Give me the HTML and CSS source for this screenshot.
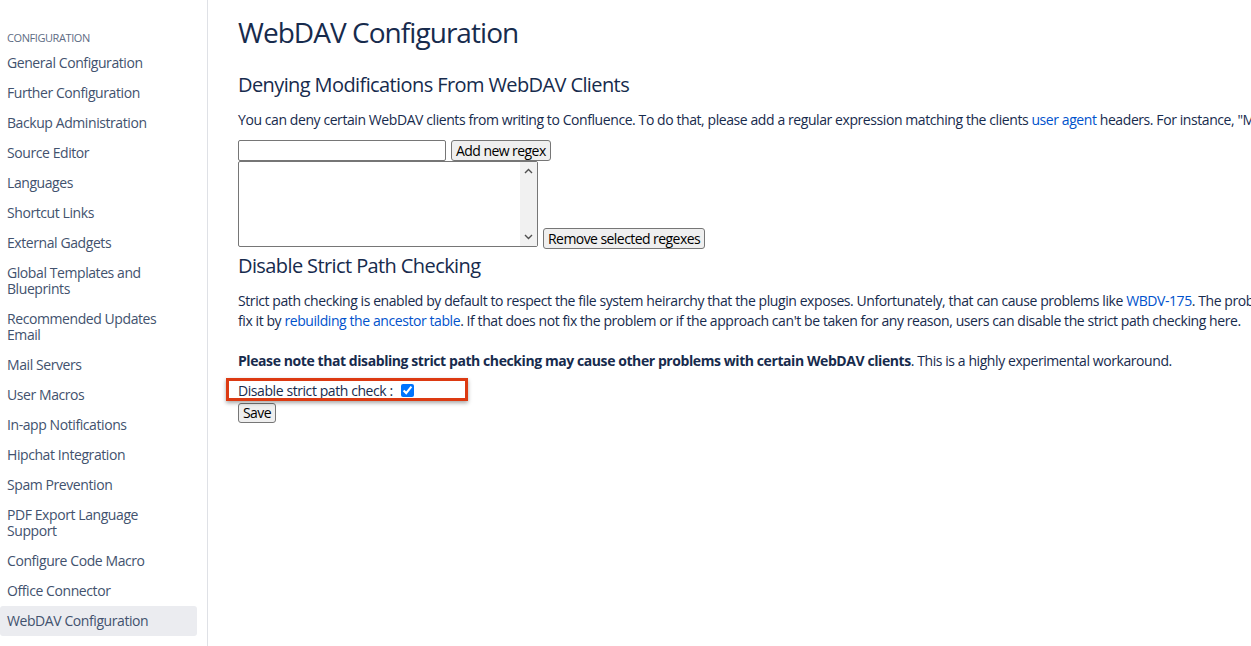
FILE: index.html
```html
<!DOCTYPE html>
<html lang="en">
<head>
  <meta charset="UTF-8" />
  <meta name="viewport" content="width=device-width, initial-scale=1.0"/>
  <title>WebDAV Configuration</title>
  <link rel="stylesheet" href="styles.css">
</head>
<body>
  <div class="page">
    <nav class="sidebar">
      <div class="nav-heading">CONFIGURATION</div>
      <a class="nav-item" href="#">General Configuration</a>
      <a class="nav-item" href="#">Further Configuration</a>
      <a class="nav-item" href="#">Backup Administration</a>
      <a class="nav-item" href="#">Source Editor</a>
      <a class="nav-item" href="#">Languages</a>
      <a class="nav-item" href="#">Shortcut Links</a>
      <a class="nav-item" href="#">External Gadgets</a>
      <a class="nav-item" href="#">Global Templates and Blueprints</a>
      <a class="nav-item" href="#">Recommended Updates Email</a>
      <a class="nav-item" href="#">Mail Servers</a>
      <a class="nav-item" href="#">User Macros</a>
      <a class="nav-item" href="#">In-app Notifications</a>
      <a class="nav-item" href="#">Hipchat Integration</a>
      <a class="nav-item" href="#">Spam Prevention</a>
      <a class="nav-item" href="#">PDF Export Language Support</a>
      <a class="nav-item" href="#">Configure Code Macro</a>
      <a class="nav-item" href="#">Office Connector</a>
      <a class="nav-item active" href="#">WebDAV Configuration</a>
    </nav>

    <main class="content">
      <h1>WebDAV Configuration</h1>

      <h2>Denying Modifications From WebDAV Clients</h2>
      <p>You can deny certain WebDAV clients from writing to Confluence. To do that, please add a regular expression matching the clients <a href="#">user agent</a> headers. For instance, "Microsoft Data Access Internet Publishing Provider" denies write access from Microsoft Office clients.</p>

      <div class="regex-form">
        <div class="row">
          <input type="text" class="regex-input" />
          <button class="btn">Add new regex</button>
        </div>
        <div class="row bottom">
          <div class="listbox">
            <div class="scrollbar">
              <svg width="9" height="6" viewBox="0 0 9 6"><path d="M1 5 L4.5 1.5 L8 5" fill="none" stroke="#505050" stroke-width="1.4"/></svg>
              <svg width="9" height="6" viewBox="0 0 9 6"><path d="M1 1 L4.5 4.5 L8 1" fill="none" stroke="#505050" stroke-width="1.4"/></svg>
            </div>
          </div>
          <button class="btn">Remove selected regexes</button>
        </div>
      </div>

      <h2 class="tight">Disable Strict Path Checking</h2>
      <p>Strict path checking is enabled by default to respect the file system heirarchy that the plugin exposes. Unfortunately, that can cause problems like <a href="#">WBDV-175</a>. The problem is usually caused by a broken ancestor table, so administrators can<br>fix it by <a href="#">rebuilding the ancestor table</a>. If that does not fix the problem or if the approach can't be taken for any reason, users can disable the strict path checking here.</p>

      <p class="note"><strong>Please note that disabling strict path checking may cause other problems with certain WebDAV clients</strong>. This is a highly experimental workaround.</p>

      <form class="strict-form">
        <label class="check-row">Disable strict path check : <input type="checkbox" checked /></label>
        <div class="highlight"></div>
        <button type="button" class="btn save">Save</button>
      </form>
    </main>
  </div>
</body>
</html>
```

FILE: styles.css
```css
html, body {
  margin: 0;
  background: #fff;
  overflow: hidden;
}
body {
  font-family: "Open Sans", "Noto Sans", sans-serif;
  font-size: 14px;
  letter-spacing: -0.03em;
  color: #172b4d;
}
a {
  color: #0052cc;
  text-decoration: none;
}
.page {
  display: flex;
  min-height: 646px;
}
.sidebar {
  width: 197px;
  flex-shrink: 0;
  padding: 30px 10px 0 0;
  border-right: 1px solid #dfe1e6;
}
.nav-heading {
  font-size: 11px;
  line-height: 16px;
  color: #5e6c84;
  padding-left: 7px;
  margin-bottom: 2px;
}
.nav-item {
  display: block;
  padding: 7px 30px 7px 7px;
  line-height: 16px;
  color: #42526e;
  border-radius: 3px;
}
.nav-item.active {
  background: #ebecf0;
}
.content {
  padding: 14px 0 0 30px;
  width: 1800px;
  flex-shrink: 0;
}
h1 {
  margin: 0;
  font-size: 28px;
  line-height: 36px;
  font-weight: 400;
  letter-spacing: -0.034em;
}
h2 {
  margin: 21px 0 0;
  font-size: 20px;
  line-height: 28px;
  font-weight: 400;
  letter-spacing: -0.03em;
}
h2.tight {
  margin-top: 5px;
}
p {
  margin: 11px 0 0;
  line-height: 20px;
}
p.note {
  margin-top: 20px;
}
.regex-form {
  margin-top: 10px;
}
.row {
  display: flex;
  gap: 5px;
}
.row.bottom {
  align-items: flex-end;
}
.row.bottom .btn {
  margin-bottom: -2px;
}
.btn {
  font-family: inherit;
  font-size: 14px;
  letter-spacing: -0.04em;
  color: #000;
  background: #efefef;
  border: 1px solid #767676;
  border-radius: 3px;
  padding: 0 4px;
  height: 21px;
  line-height: 18px;
}
.regex-input {
  width: 204px;
  height: 17px;
  border: 1px solid #767676;
  border-radius: 2px;
  padding: 1px;
  margin: 0;
}
.listbox {
  width: 298px;
  height: 84px;
  border: 1px solid #767676;
  border-radius: 2px;
  display: flex;
  justify-content: flex-end;
}
.scrollbar {
  width: 17px;
  background: #f1f1f1;
  display: flex;
  flex-direction: column;
  justify-content: space-between;
  align-items: center;
  padding: 6px 0;
}
.strict-form {
  margin-top: 9px;
  position: relative;
}
.check-row {
  display: flex;
  align-items: center;
  height: 20px;
}
.check-row input {
  margin: 0 0 0 8px;
  width: 13px;
  height: 13px;
}
.highlight {
  position: absolute;
  left: -12px;
  top: -2px;
  width: 236px;
  height: 17px;
  border: 3px solid #dc3a12;
  box-shadow: 0 2px 4px rgba(0, 0, 0, 0.35);
}
.save {
  margin-top: 3px;
  height: 20px;
}
```
